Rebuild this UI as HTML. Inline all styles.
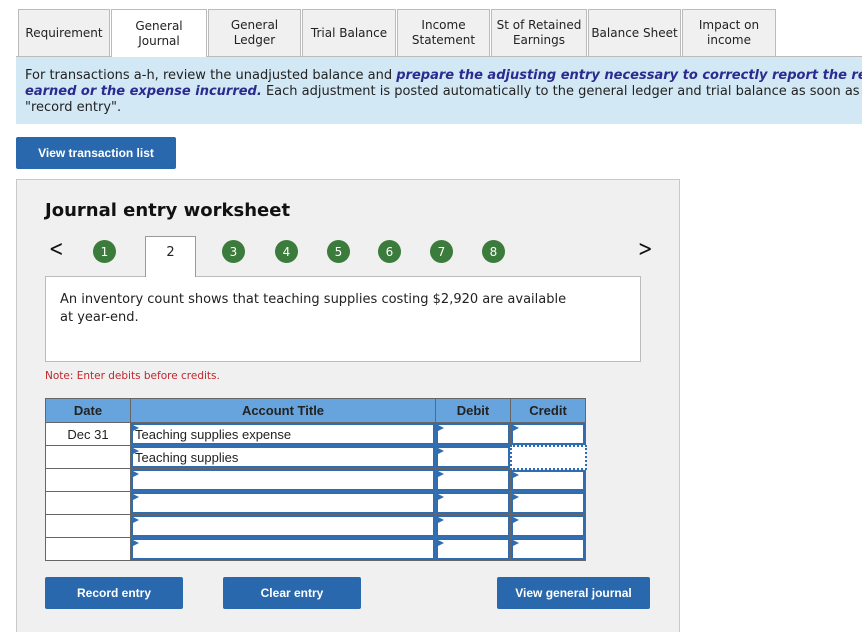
<!DOCTYPE html>
<html><head><meta charset="utf-8"><style>
*{box-sizing:border-box;margin:0;padding:0}
html,body{width:862px;height:632px;overflow:hidden}
body{background:#fff;font-family:"DejaVu Sans","Liberation Sans",sans-serif;position:relative;color:#222}
.a{position:absolute}
.tab{position:absolute;top:9px;height:47px;background:#f0f0f0;border:1px solid #bbb;border-bottom:none;font-size:12px;display:flex;align-items:center;justify-content:center;text-align:center;line-height:15px;color:#222}
.tab.act{background:#fff;top:9px;height:48px;z-index:2}
.info{left:16px;top:57px;width:846px;height:67px;background:#d3e8f5;font-size:13px;line-height:16px;padding:11px 0 0 9px;white-space:nowrap;overflow:hidden}
.info b{color:#2b2b8f;font-style:italic}
.btn{position:absolute;background:#2a68ad;color:#fff;font-family:"Liberation Sans",sans-serif;font-weight:bold;font-size:12px;display:flex;align-items:center;justify-content:center;border-radius:2px}
.circ{position:absolute;top:240px;width:23px;height:23px;border-radius:50%;background:#3b7b3b;color:#fff;font-size:12px;display:flex;align-items:center;justify-content:center}
table{position:absolute;left:45px;top:398px;border-collapse:collapse;font-family:"Liberation Sans",sans-serif;font-size:13px}
td,th{border:1px solid #666;height:23px;padding:0}
th{background:#67a3dc;font-weight:bold;color:#222;height:24px}
td.in{position:relative;background:#fff;box-shadow:inset 0 0 0 2px #2f6db0}
td.in::before{content:"";position:absolute;left:2px;top:2px;border-left:6px solid #2f6db0;border-top:3px solid transparent;border-bottom:3px solid transparent}
td.in span{position:absolute;left:4px;top:4px;color:#222}
</style></head><body>
<div class="tab" style="left:18px;width:92px">Requirement</div>
<div class="tab act" style="left:111px;width:96px">General<br>Journal</div>
<div class="tab" style="left:208px;width:93px">General<br>Ledger</div>
<div class="tab" style="left:302px;width:94px">Trial Balance</div>
<div class="tab" style="left:397px;width:93px">Income<br>Statement</div>
<div class="tab" style="left:491px;width:96px">St of Retained<br>Earnings</div>
<div class="tab" style="left:588px;width:93px">Balance Sheet</div>
<div class="tab" style="left:682px;width:94px">Impact on<br>income</div>
<div class="a" style="left:16px;top:56px;width:846px;height:1px;background:#bbb"></div>
<div class="a info">For transactions a-h, review the unadjusted balance and <b>prepare the adjusting entry necessary to correctly report the revenue</b><br><b>earned or the expense incurred.</b> Each adjustment is posted automatically to the general ledger and trial balance as soon as you<br>"record entry".</div>
<div class="btn" style="left:16px;top:137px;width:160px;height:32px">View transaction list</div>
<div class="a" style="left:16px;top:179px;width:664px;height:460px;background:#f0f0f0;border:1px solid #c8c8c8"></div>
<div class="a" style="left:45px;top:200px;font-size:18px;font-weight:bold;color:#111">Journal entry worksheet</div>
<div class="a" style="left:47px;top:237px;font-size:22px;color:#111;transform:scaleX(.8)">&lt;</div>
<div class="a" style="left:636px;top:237px;font-size:22px;color:#111;transform:scaleX(.8)">&gt;</div>
<div class="circ" style="left:93px">1</div>
<div class="a" style="left:145px;top:236px;width:51px;height:41px;background:#fff;border:1px solid #999;border-bottom:none;z-index:2;font-size:13px;text-align:center;padding-top:8px">2</div>
<div class="circ" style="left:222px">3</div>
<div class="circ" style="left:275px">4</div>
<div class="circ" style="left:327px">5</div>
<div class="circ" style="left:378px">6</div>
<div class="circ" style="left:430px">7</div>
<div class="circ" style="left:482px">8</div>
<div class="a" style="left:45px;top:276px;width:596px;height:86px;background:#fff;border:1px solid #bbb;font-size:13px;line-height:18px;padding:14px 0 0 14px">An inventory count shows that teaching supplies costing $2,920 are available<br>at year-end.</div>
<div class="a" style="left:45px;top:370px;font-size:10.5px;color:#c0262d">Note: Enter debits before credits.</div>
<table>
<tr><th style="width:85px">Date</th><th style="width:305px">Account Title</th><th style="width:75px">Debit</th><th style="width:75px">Credit</th></tr>
<tr><td style="text-align:center;background:#fff">Dec 31</td><td class="in"><span>Teaching supplies expense</span></td><td class="in"></td><td class="in"></td></tr>
<tr><td style="background:#fff"></td><td class="in"><span>Teaching supplies</span></td><td class="in"></td><td style="background:#fff;border:2px dotted #2f6db0"></td></tr>
<tr><td style="background:#fff"></td><td class="in"></td><td class="in"></td><td class="in"></td></tr>
<tr><td style="background:#fff"></td><td class="in"></td><td class="in"></td><td class="in"></td></tr>
<tr><td style="background:#fff"></td><td class="in"></td><td class="in"></td><td class="in"></td></tr>
<tr><td style="background:#fff"></td><td class="in"></td><td class="in"></td><td class="in"></td></tr>
</table>
<div class="btn" style="left:45px;top:577px;width:138px;height:32px">Record entry</div>
<div class="btn" style="left:223px;top:577px;width:138px;height:32px">Clear entry</div>
<div class="btn" style="left:497px;top:577px;width:153px;height:32px">View general journal</div>
</body></html>
